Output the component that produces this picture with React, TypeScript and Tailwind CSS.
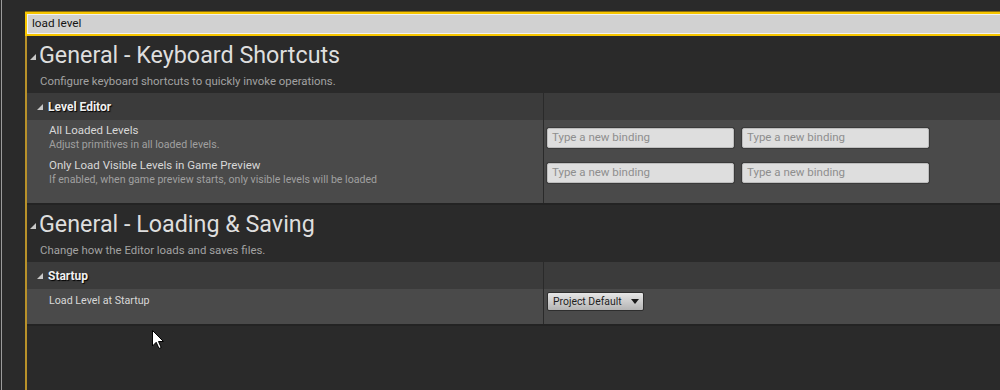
import React from "react";

const Tri = ({ className }: { className?: string }) => (
  <svg width="6" height="6" viewBox="0 0 6 6" className={className}>
    <polygon points="6,0 6,6 0,6" fill="#c8c8c8" />
  </svg>
);

const SectionHeader = ({ title, desc }: { title: string; desc: string }) => (
  <div className="flex flex-col">
    <div className="h-[37px] flex items-center pl-[3px]">
      <Tri className="mt-[5px] mr-[3px]" />
      <span className="text-[23.3px] text-[#dedede] leading-none pt-[3px]">{title}</span>
    </div>
    <div className="h-[20px] pl-[13px] text-[11.4px] leading-[16px] text-[#a2a2a2]">{desc}</div>
  </div>
);

const Category = ({ label }: { label: string }) => (
  <div className="h-[27px] flex bg-[#3b3b3b]">
    <div className="w-[516px] flex items-center pl-[10px]">
      <Tri className="mr-[5px] mt-[1px]" />
      <span className="text-[12px] font-bold text-[#f0f0f0] [text-shadow:1px_1px_1px_#000]">{label}</span>
    </div>
    <div className="w-px bg-[#2a2a2a]" />
    <div className="flex-1" />
  </div>
);

const Binding = () => (
  <div className="w-[187px] h-[20px] rounded-[2px] bg-[#dedede] border border-[#bdbdbd] shadow-[0_0_0_1px_#3a3a3a] flex items-center pl-[4px] text-[11.5px] text-[#8e8e8e]">
    Type a new binding
  </div>
);

export default function App() {
  return (
    <div className="w-[1000px] h-[390px] bg-[#2a2a2a] flex overflow-hidden relative font-['Roboto',sans-serif]">
      <div className="w-[25px] shrink-0 flex">
        <div className="w-px ml-px bg-[#9c9c9c]" />
      </div>
      <div className="flex-1 min-w-0 flex flex-col pt-[12px]">
        <div className="h-[24px] border-y-2 border-l-2 border-[#f7c600] shadow-[0_-1px_0_#8a6d10]">
          <div className="h-full border-y border-l border-[#f2f2f2] bg-[#d1d1d1] flex items-center pl-[4px] text-[11.8px] text-[#151515]">
            load level
          </div>
        </div>
        <div className="flex-1 border-l-2 border-[#b8912a] flex flex-col">
          <SectionHeader title="General - Keyboard Shortcuts" desc="Configure keyboard shortcuts to quickly invoke operations." />
          <Category label="Level Editor" />
          <div className="flex bg-[#4a4a4a] border-b-2 border-[#232323]">
            <div className="w-[516px] flex flex-col pl-[22px] pb-[13px]">
              <div className="h-[35px] flex flex-col justify-center">
                <div className="text-[11.5px] leading-[15px] text-[#d8d8d8] -mt-[1px]">All Loaded Levels</div>
                <div className="text-[10.6px] leading-[13px] text-[#a0a0a0]">Adjust primitives in all loaded levels.</div>
              </div>
              <div className="h-[35px] flex flex-col justify-center">
                <div className="text-[11.5px] leading-[15px] text-[#d8d8d8] -mt-[1px]">Only Load Visible Levels in Game Preview</div>
                <div className="text-[10.6px] leading-[13px] text-[#a0a0a0]">If enabled, when game preview starts, only visible levels will be loaded</div>
              </div>
            </div>
            <div className="w-px bg-[#2a2a2a]" />
            <div className="flex-1 flex flex-col pl-[3px]">
              <div className="h-[35px] flex items-center gap-[8px]">
                <Binding />
                <Binding />
              </div>
              <div className="h-[35px] flex items-center gap-[8px]">
                <Binding />
                <Binding />
              </div>
            </div>
          </div>
          <SectionHeader title="General - Loading & Saving" desc="Change how the Editor loads and saves files." />
          <Category label="Startup" />
          <div className="flex bg-[#4a4a4a] border-b-2 border-[#232323]">
            <div className="w-[516px] pl-[22px] pt-[5px] h-[35px] text-[10.7px] leading-[14px] text-[#d8d8d8]">
              Load Level at Startup
            </div>
            <div className="w-px bg-[#2a2a2a]" />
            <div className="flex-1 pl-[3px] pt-[3px]">
              <div className="w-[97px] h-[19px] rounded-[2px] border border-[#2e2e2e] bg-gradient-to-b from-[#e6e6e6] to-[#b4b4b4] flex items-center pl-[5px] text-[10.4px] text-[#1e1e1e]">
                <span>Project Default</span>
                <svg width="8" height="5" viewBox="0 0 8 5" className="ml-[9px]">
                  <polygon points="0,0 8,0 4,5" fill="#1a1a1a" />
                </svg>
              </div>
            </div>
          </div>
          <div className="flex-1" />
        </div>
      </div>
      <svg width="13" height="20" viewBox="0 0 13 20" className="absolute left-[152px] top-[330px]">
        <polygon points="0.5,0.5 0.5,16 4.2,12.3 7,18.5 9.2,17.5 6.5,11.5 11.5,11.5" fill="#ffffff" stroke="#000" strokeWidth="1" />
      </svg>
    </div>
  );
}
